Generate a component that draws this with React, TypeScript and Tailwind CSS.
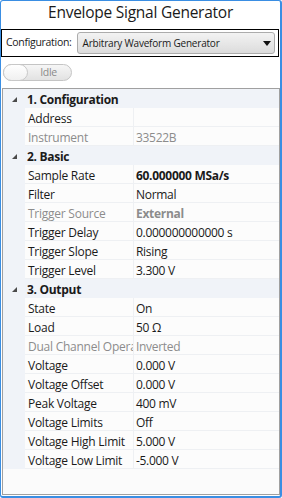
import React from "react";

type Row =
  | { kind: "cat"; label: string }
  | { kind: "prop"; name: string; value: string; disabled?: boolean; bold?: boolean };

const rows: Row[] = [
  { kind: "cat", label: "1. Configuration" },
  { kind: "prop", name: "Address", value: "" },
  { kind: "prop", name: "Instrument", value: "33522B", disabled: true },
  { kind: "cat", label: "2. Basic" },
  { kind: "prop", name: "Sample Rate", value: "60.000000 MSa/s", bold: true },
  { kind: "prop", name: "Filter", value: "Normal" },
  { kind: "prop", name: "Trigger Source", value: "External", disabled: true, bold: true },
  { kind: "prop", name: "Trigger Delay", value: "0.000000000000 s" },
  { kind: "prop", name: "Trigger Slope", value: "Rising" },
  { kind: "prop", name: "Trigger Level", value: "3.300 V" },
  { kind: "cat", label: "3. Output" },
  { kind: "prop", name: "State", value: "On" },
  { kind: "prop", name: "Load", value: "50 Ω" },
  { kind: "prop", name: "Dual Channel Opera", value: "Inverted", disabled: true },
  { kind: "prop", name: "Voltage", value: "0.000 V" },
  { kind: "prop", name: "Voltage Offset", value: "0.000 V" },
  { kind: "prop", name: "Peak Voltage", value: "400 mV" },
  { kind: "prop", name: "Voltage Limits", value: "Off" },
  { kind: "prop", name: "Voltage High Limit", value: "5.000 V" },
  { kind: "prop", name: "Voltage Low Limit", value: "-5.000 V" },
];

function Expander() {
  return (
    <svg width="5" height="5" viewBox="0 0 5 5" className="block">
      <polygon points="5,0 5,5 0,5" fill="#4a4a4a" />
    </svg>
  );
}

export default function App() {
  return (
    <div
      className="w-[282px] h-[498px] bg-white overflow-hidden"
      style={{ fontFamily: '"Open Sans", "Noto Sans", sans-serif' }}
    >
      <div className="w-full h-full flex flex-col border-t border-l border-r-2 border-b-2 border-[#3a8ee3] rounded-[3px] bg-white">
        <div className="h-[28px] flex items-center justify-center pb-[4px] text-[15.5px] text-[#1a1a1a] tracking-[-0.25px]">
          Envelope Signal Generator
        </div>
        <div className="h-[28px] mr-[1px] border border-black flex items-center pl-[4px] pr-[3px] gap-[5px]">
          <span className="text-[10.5px] text-[#1a1a1a] tracking-[-0.3px]">Configuration:</span>
          <div className="flex-1 h-[22px] rounded-[3px] border border-[#acacac] bg-gradient-to-b from-[#f3f3f3] to-[#dcdcdc] flex items-center pl-[5px] pr-[3px]">
            <span className="flex-1 text-[10px] text-[#1a1a1a] tracking-[-0.2px]">Arbitrary Waveform Generator</span>
            <svg width="8" height="5" viewBox="0 0 8 5" className="block">
              <polygon points="0,0 8,0 4,5" fill="#111" />
            </svg>
          </div>
        </div>
        <div className="h-[31px] flex items-center pl-[2px]">
          <div className="relative w-[69px] h-[17px] rounded-full border border-[#c4c4c4] bg-gradient-to-b from-[#f6f6f6] to-[#e2e2e2] flex items-center justify-center pl-[22px]">
            <div className="absolute left-[-1px] top-[-1px] w-[25px] h-[17px] rounded-full border border-[#c8c8c8] bg-gradient-to-b from-white to-[#f0f0f0]" />
            <span className="text-[10.5px] text-[#8a8a8a] tracking-[-0.3px]">Idle</span>
          </div>
        </div>
        <div className="flex-1 ml-[1px] mb-[1px] border border-[#a0a0a0] bg-[#fbfbfb] flex flex-col">
          {rows.map((r, i) =>
            r.kind === "cat" ? (
              <div key={i} className="h-[19px] bg-[#f0f3f8] flex items-center">
                <div className="w-[22px] flex justify-end pr-[8px] pt-[1px]">
                  <Expander />
                </div>
                <span className="pl-[2px] pt-[3px] text-[12px] font-bold text-[#1a1a1a] tracking-[-0.3px]">{r.label}</span>
              </div>
            ) : (
              <div key={i} className="h-[19px] flex bg-[#f0f3f8]">
                <div className="w-[22px]" />
                <div className="w-[109px] bg-[#fcfcfc] border-b border-[#eef0f3] border-r flex items-center pl-[3px] pt-[3px] overflow-hidden whitespace-nowrap">
                  <span className={`text-[12px] tracking-[-0.25px] ${r.disabled ? "text-[#8c8c8c]" : "text-[#1a1a1a]"}`}>{r.name}</span>
                </div>
                <div className="flex-1 bg-[#fcfcfc] border-b border-[#eef0f3] flex items-center pl-[2px] pt-[3px] whitespace-nowrap">
                  <span
                    className={`text-[12px] tracking-[-0.3px] ${r.disabled ? "text-[#8c8c8c]" : "text-[#1a1a1a]"} ${r.bold ? "font-bold" : ""}`}
                  >
                    {r.value}
                  </span>
                </div>
              </div>
            )
          )}
        </div>
      </div>
    </div>
  );
}
